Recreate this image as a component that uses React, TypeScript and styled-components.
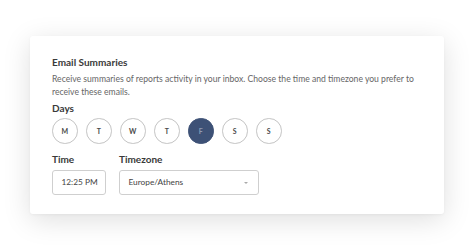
import React from "react";
import styled, { createGlobalStyle } from "styled-components";

const Global = createGlobalStyle`
  html, body { margin: 0; padding: 0; background: #ffffff; }
  body { font-family: Lato, "Open Sans", sans-serif; -webkit-font-smoothing: antialiased; }
  * { box-sizing: border-box; }
`;

const Page = styled.div`
  width: 474px;
  height: 251px;
  padding: 36px 0 0 30px;
`;

const Card = styled.section`
  width: 414px;
  height: 178px;
  background: #fff;
  border-radius: 3px;
  box-shadow: 0 6px 28px rgba(0, 0, 0, 0.13), 0 1px 3px rgba(0, 0, 0, 0.04);
  padding: 20px 22px 0 22px;
  display: flex;
  flex-direction: column;
`;

const Title = styled.h2`
  margin: 0;
  font-size: 10px;
  line-height: 13px;
  font-weight: 700;
  color: #3a3a3a;
`;

const Desc = styled.p`
  margin: 4px 0 0;
  font-size: 8.6px;
  line-height: 12.5px;
  color: #666;
  max-width: 370px;
`;

const Label = styled.div`
  font-size: 10px;
  line-height: 13px;
  font-weight: 700;
  color: #3a3a3a;
`;

const DaysBlock = styled.div`
  margin-top: 4px;
  display: flex;
  flex-direction: column;
  gap: 3px;
`;

const DayRow = styled.div`
  display: flex;
  gap: 8.5px;
`;

const Day = styled.button<{ $active?: boolean }>`
  width: 25.5px;
  height: 25.5px;
  border-radius: 50%;
  padding: 0;
  border: 1px solid ${(p) => (p.$active ? "#3d5176" : "#c4c4c4")};
  background: ${(p) => (p.$active ? "#3d5176" : "#fff")};
  color: ${(p) => (p.$active ? "#8d9ab3" : "#4a4a4a")};
  font-family: Lato, sans-serif;
  font-weight: 700;
  font-size: 7px;
  display: flex;
  align-items: center;
  justify-content: center;
`;

const FieldsRow = styled.div`
  margin-top: 9px;
  display: flex;
  gap: 13px;
`;

const Field = styled.div`
  display: flex;
  flex-direction: column;
  gap: 4px;
`;

const Box = styled.div<{ $w: number }>`
  width: ${(p) => p.$w}px;
  height: 25px;
  border: 1px solid #cfcfcf;
  border-radius: 3px;
  display: flex;
  align-items: center;
  padding: 0 0 0 8.5px;
  font-size: 8.3px;
  color: #444;
  position: relative;
`;

const Chevron = styled.span`
  position: absolute;
  right: 10px;
  top: 11px;
  width: 0;
  height: 0;
  border-left: 2.5px solid transparent;
  border-right: 2.5px solid transparent;
  border-top: 2.5px solid #aaa;
`;

const days = ["M", "T", "W", "T", "F", "S", "S"];

export default function App() {
  return (
    <>
      <Global />
      <Page>
        <Card>
          <Title>Email Summaries</Title>
          <Desc>
            Receive summaries of reports activity in your inbox. Choose the time and timezone you prefer to
            receive these emails.
          </Desc>
          <DaysBlock>
            <Label>Days</Label>
            <DayRow>
              {days.map((d, i) => (
                <Day key={i} $active={i === 4}>
                  {d}
                </Day>
              ))}
            </DayRow>
          </DaysBlock>
          <FieldsRow>
            <Field>
              <Label>Time</Label>
              <Box $w={54}>12:25 PM</Box>
            </Field>
            <Field>
              <Label>Timezone</Label>
              <Box $w={140}>
                Europe/Athens
                <Chevron />
              </Box>
            </Field>
          </FieldsRow>
        </Card>
      </Page>
    </>
  );
}
